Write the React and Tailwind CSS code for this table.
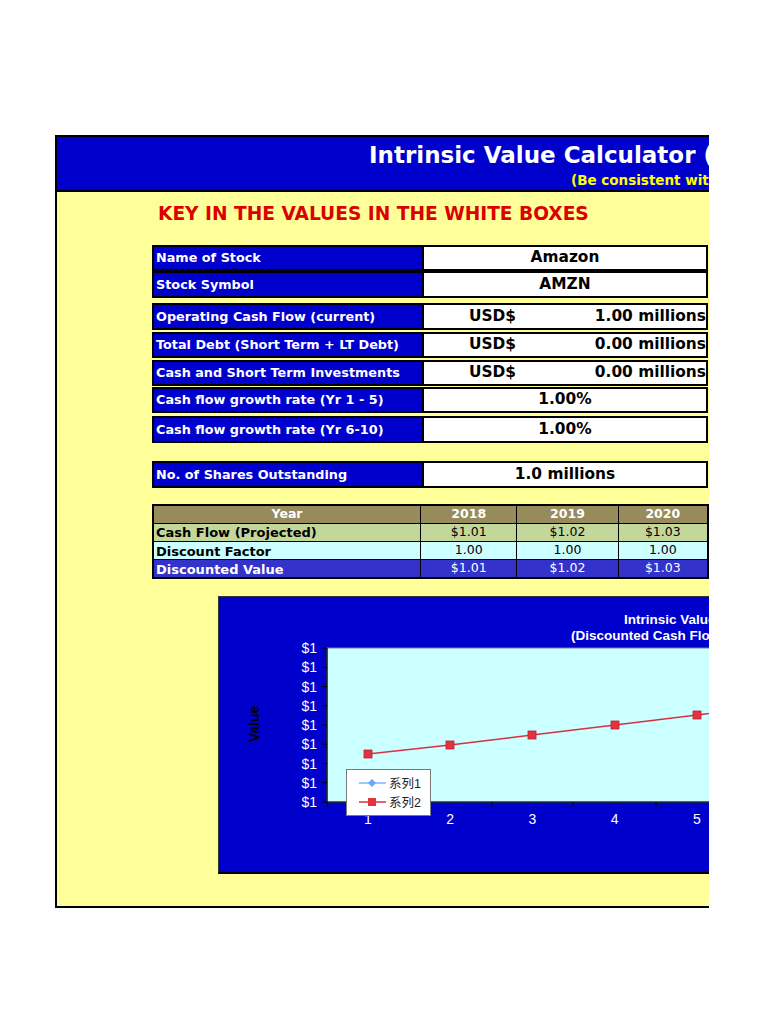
const rows = [
  { label: "Name of Stock", value: "Amazon", mt: "mt-[20px]", h: "h-[26px]" },
  { label: "Stock Symbol", value: "AMZN", mt: "mt-0", h: "h-[27px]" },
  { label: "Operating Cash Flow (current)", usd: "1.00 millions", mt: "mt-[5px]", h: "h-[27px]" },
  { label: "Total Debt (Short Term + LT Debt)", usd: "0.00 millions", mt: "mt-[2px]", h: "h-[26px]" },
  { label: "Cash and Short Term Investments", usd: "0.00 millions", mt: "mt-[2px]", h: "h-[26px]" },
  { label: "Cash flow growth rate (Yr 1 - 5)", value: "1.00%", mt: "mt-[1px]", h: "h-[26px]" },
  { label: "Cash flow growth rate (Yr 6-10)", value: "1.00%", mt: "mt-[3px]", h: "h-[27px]" },
  { label: "No. of Shares Outstanding", value: "1.0 millions", mt: "mt-[18px]", h: "h-[27px]" },
];

const years = [
  { year: "2018", cf: "$1.01", df: "1.00", dv: "$1.01", w: "w-[97px]" },
  { year: "2019", cf: "$1.02", df: "1.00", dv: "$1.02", w: "w-[102px]" },
  { year: "2020", cf: "$1.03", df: "1.00", dv: "$1.03", w: "w-[90px]" },
];

const InputRow = ({ row }) => (
  <div className={`flex w-[556px] border-2 border-black ${row.mt} ${row.h}`}>
    <div className="w-[268px] bg-[#0000cc] text-white font-bold text-[12.8px] pl-[2px] flex items-center whitespace-nowrap">
      {row.label}
    </div>
    <div className="flex-1 bg-white border-l-2 border-black text-black font-bold text-[15.4px] flex items-center whitespace-nowrap">
      {row.usd ? (
        <div className="flex w-full justify-between pl-[45px]">
          <span>USD$</span>
          <span>{row.usd}</span>
        </div>
      ) : (
        <div className="w-full text-center">{row.value}</div>
      )}
    </div>
  </div>
);

const ProjectionTable = () => (
  <div className="w-[557px] mt-[16px] border-2 border-black text-[12.5px] leading-none">
    <div className="flex h-[18px] bg-[#978b5c] text-white font-bold border-b border-black">
      <div className="w-[268px] flex items-center justify-center">Year</div>
      {years.map((y) => (
        <div key={y.year} className={`${y.w} border-l border-black flex items-center justify-center`}>
          {y.year}
        </div>
      ))}
    </div>
    <div className="flex h-[18px] bg-[#c4d79b] text-black border-b border-black">
      <div className="w-[268px] flex items-center pl-[2px] font-bold text-[13px]">Cash Flow (Projected)</div>
      {years.map((y) => (
        <div key={y.year} className={`${y.w} border-l border-black flex items-center justify-center`}>
          {y.cf}
        </div>
      ))}
    </div>
    <div className="flex h-[18px] bg-[#ccffff] text-black border-b border-black">
      <div className="w-[268px] flex items-end pb-[1px] pl-[2px] font-bold text-[13px]">Discount Factor</div>
      {years.map((y) => (
        <div key={y.year} className={`${y.w} border-l border-black flex items-center justify-center`}>
          {y.df}
        </div>
      ))}
    </div>
    <div className="flex h-[17px] bg-[#3333cc] text-white">
      <div className="w-[268px] flex items-end pb-[1px] pl-[2px] font-bold text-[13px]">Discounted Value</div>
      {years.map((y) => (
        <div key={y.year} className={`${y.w} border-l border-black flex items-center justify-center`}>
          {y.dv}
        </div>
      ))}
    </div>
  </div>
);

const Chart = () => {
  const yTicks = Array.from({ length: 9 }, (_, i) => 51 + i * 19.25);
  const xTicks = [108, 190, 273, 354, 437, 519];
  const pts = [
    [149, 157],
    [231, 148],
    [313, 138],
    [396, 128],
    [478, 118],
    [560, 108],
  ];
  return (
    <div className="ml-[161px] mt-[17px] w-[520px] h-[278px] bg-[#0000cc] border border-[#333] border-b-2 border-b-black">
      <svg width="520" height="275" className="block" style={{ fontFamily: '"Liberation Sans", Arial, "Noto Sans CJK SC", sans-serif' }}>
        <text x="405" y="27" fill="#fff" fontSize="13.5" fontWeight="bold">Intrinsic Value</text>
        <text x="352" y="43" fill="#fff" fontSize="13.5" fontWeight="bold">(Discounted Cash Flow)</text>

        <rect x="108" y="51" width="420" height="154" fill="#ccffff" stroke="#808080" strokeWidth="1" />
        <line x1="108" y1="51" x2="108" y2="205" stroke="#000" strokeWidth="1.2" />
        <line x1="108" y1="205" x2="520" y2="205" stroke="#000" strokeWidth="1.2" />

        {yTicks.map((y, i) => (
          <g key={i}>
            <line x1="103" y1={y} x2="108" y2={y} stroke="#000" strokeWidth="1" />
            <text x="98" y={y + 5} fill="#fff" fontSize="14" textAnchor="end">$1</text>
          </g>
        ))}
        {xTicks.map((x) => (
          <line key={x} x1={x} y1="205" x2={x} y2="210" stroke="#000" strokeWidth="1" />
        ))}
        {[1, 2, 3, 4, 5].map((n, i) => (
          <text key={n} x={149 + i * 82.2} y="227" fill="#fff" fontSize="14" textAnchor="middle">
            {n}
          </text>
        ))}

        <text
          x="0"
          y="0"
          fill="#000"
          fontSize="14"
          fontWeight="bold"
          textAnchor="middle"
          transform="translate(40 127) rotate(-90)"
        >
          Value
        </text>

        <polyline
          points={pts.map((p) => p.join(",")).join(" ")}
          fill="none"
          stroke="#d8303c"
          strokeWidth="1.5"
        />
        {pts.map(([x, y]) => (
          <rect key={x} x={x - 4} y={y - 4} width="8" height="8" fill="#e5323f" stroke="#b82030" strokeWidth="0.8" />
        ))}

        <rect x="127.5" y="172.5" width="84" height="46" fill="#fff" stroke="#7a7a7a" strokeWidth="1" />
        <line x1="140" y1="186" x2="167" y2="186" stroke="#7fb3ff" strokeWidth="1.5" />
        <path d="M153 182 L157 186 L153 190 L149 186 Z" fill="#6aa5ff" />
        <text x="170" y="190.5" fill="#222" fontSize="12.5">系列1</text>
        <line x1="140" y1="205" x2="167" y2="205" stroke="#d8303c" strokeWidth="1.5" />
        <rect x="149" y="201" width="8" height="8" fill="#e5323f" />
        <text x="170" y="209.5" fill="#222" fontSize="12.5">系列2</text>
      </svg>
    </div>
  );
};

export default function App() {
  return (
    <div
      className="min-h-screen bg-white pt-[135px] pl-[55px]"
      style={{ fontFamily: '"DejaVu Sans", Verdana, sans-serif' }}
    >
      <div className="w-[654px] overflow-hidden">
        <div className="w-[760px] border-2 border-black">
          <div className="h-[55px] bg-[#0000cc] border-b-2 border-black">
            <div className="pl-[312px] pt-[4px] text-white font-bold text-[23px] leading-[28px] whitespace-nowrap">
              Intrinsic Value Calculator (DCF Method)
            </div>
            <div className="pl-[514px] mt-[3px] text-[#ffff00] font-bold text-[13.5px] leading-[16px] whitespace-nowrap">
              (Be consistent with the currency)
            </div>
          </div>
          <div className="bg-[#ffff99] pt-[11px] pb-[32px]">
            <div className="pl-[101px] text-[#dd0000] font-bold text-[18.6px] leading-[22px]">
              KEY IN THE VALUES IN THE WHITE BOXES
            </div>
            <div className="ml-[95px]">
              {rows.map((row) => (
                <InputRow key={row.label} row={row} />
              ))}
              <ProjectionTable />
            </div>
            <Chart />
          </div>
        </div>
      </div>
    </div>
  );
}
